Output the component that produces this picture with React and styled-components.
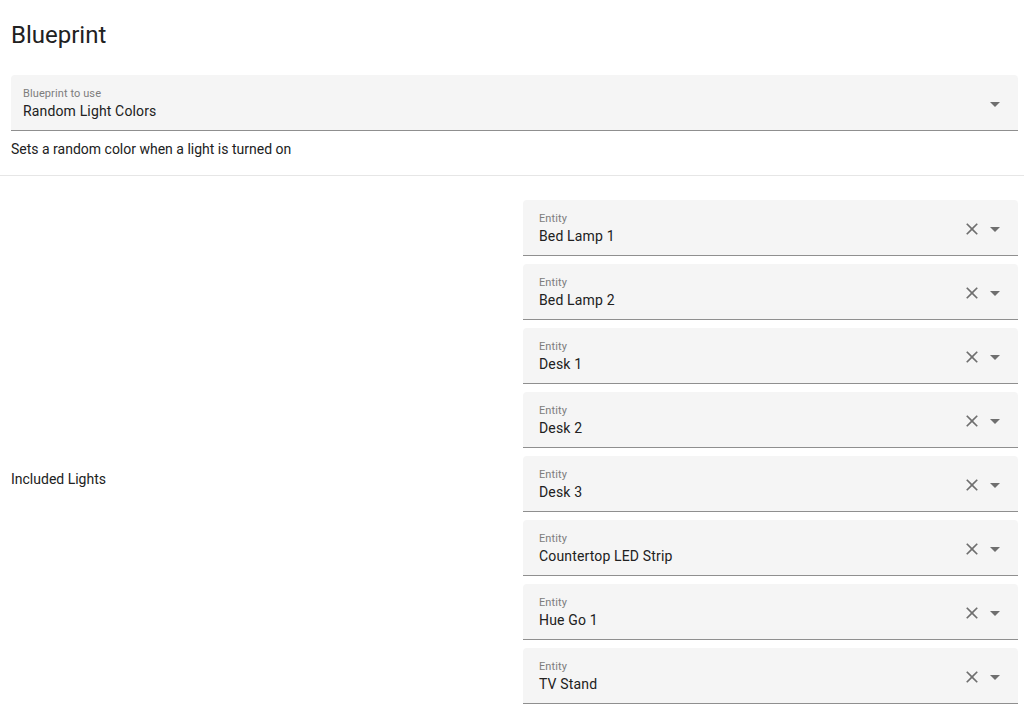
import React from "react";
import styled, { createGlobalStyle } from "styled-components";

const Global = createGlobalStyle`
  html, body { margin: 0; padding: 0; background: #fff; }
  body { font-family: Roboto, "Noto Sans", sans-serif; color: #212121; -webkit-font-smoothing: antialiased; }
`;

const Page = styled.div`
  display: flex;
  flex-direction: column;
`;

const Header = styled.div`
  padding: 19px 6px 0 11px;
`;

const Title = styled.h1`
  margin: 0 0 24px;
  font-size: 24px;
  font-weight: 400;
  line-height: 32px;
  color: #212121;
`;

const Field = styled.div`
  position: relative;
  height: 56px;
  box-sizing: border-box;
  background: #f5f5f5;
  border-radius: 4px 4px 0 0;
  border-bottom: 1px solid #8f8f8f;
  display: flex;
  align-items: center;
  padding: 0 11px 0 ${(p) => p.$padLeft || 12}px;
`;

const FieldText = styled.div`
  flex: 1;
  display: flex;
  flex-direction: column;
  padding-top: 2px;
`;

const Label = styled.span`
  font-size: 11px;
  line-height: 14px;
  color: #7d7d7d;
  letter-spacing: 0.1px;
`;

const Value = styled.span`
  font-size: 14px;
  line-height: 20px;
  color: #212121;
  letter-spacing: 0.15px;
`;

const Icons = styled.div`
  display: flex;
  align-items: center;
  gap: 1px;
  margin-top: 2px;
`;

const IconBox = styled.span`
  display: inline-flex;
  width: ${(p) => p.$size}px;
  height: ${(p) => p.$size}px;
  color: #6f6f6f;
`;

const Description = styled.p`
  margin: 0;
  padding: 10px 0 17px;
  font-size: 14px;
  line-height: 17px;
  color: #212121;
`;

const Divider = styled.hr`
  margin: 0;
  border: 0;
  border-top: 1px solid #e6e6e6;
`;

const Row = styled.div`
  display: flex;
  align-items: center;
  padding: 24px 6px 0 11px;
`;

const RowLabel = styled.div`
  flex: 1;
  font-size: 14px;
  color: #212121;
`;

const List = styled.div`
  width: 495px;
  display: flex;
  flex-direction: column;
  gap: 8px;
  padding-bottom: 53px;
`;

const CloseIcon = () => (
  <IconBox $size={20}>
    <svg viewBox="0 0 24 24" width="20" height="20" fill="currentColor">
      <path d="M19,6.41L17.59,5L12,10.59L6.41,5L5,6.41L10.59,12L5,17.59L6.41,19L12,13.41L17.59,19L19,17.59L13.41,12L19,6.41Z" />
    </svg>
  </IconBox>
);

const MenuDown = () => (
  <IconBox $size={24}>
    <svg viewBox="0 0 24 24" width="24" height="24" fill="currentColor">
      <path d="M7,10L12,15L17,10H7Z" />
    </svg>
  </IconBox>
);

const entities = [
  "Bed Lamp 1",
  "Bed Lamp 2",
  "Desk 1",
  "Desk 2",
  "Desk 3",
  "Countertop LED Strip",
  "Hue Go 1",
  "TV Stand",
];

export default function App() {
  return (
    <Page>
      <Global />
      <Header>
        <Title>Blueprint</Title>
        <Field $padLeft={12}>
          <FieldText>
            <Label>Blueprint to use</Label>
            <Value>Random Light Colors</Value>
          </FieldText>
          <Icons>
            <MenuDown />
          </Icons>
        </Field>
        <Description>Sets a random color when a light is turned on</Description>
      </Header>
      <Divider />
      <Row>
        <RowLabel>Included Lights</RowLabel>
        <List>
          {entities.map((e) => (
            <Field key={e} $padLeft={16}>
              <FieldText>
                <Label>Entity</Label>
                <Value>{e}</Value>
              </FieldText>
              <Icons>
                <CloseIcon />
                <MenuDown />
              </Icons>
            </Field>
          ))}
        </List>
      </Row>
    </Page>
  );
}
